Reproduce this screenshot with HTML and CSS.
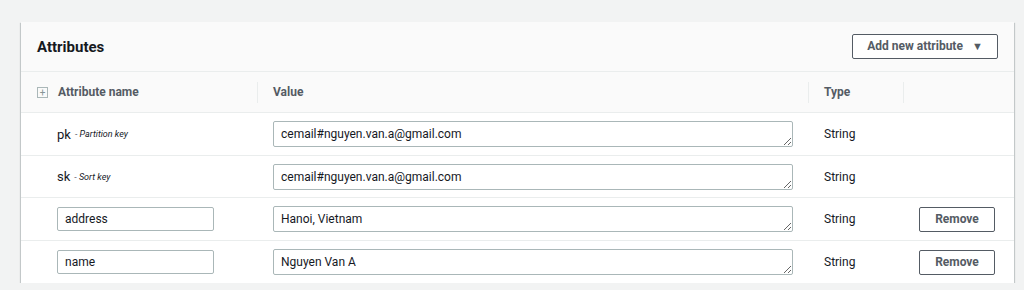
FILE: index.html
```html
<!DOCTYPE html>
<html lang="en">
<head>
<meta charset="UTF-8">
<title>Attributes</title>
<link rel="stylesheet" href="styles.css">
</head>
<body>
<div class="panel">
    <div class="panel-header">
        <h2>Attributes</h2>
        <button class="btn btn-dropdown">Add new attribute <span class="caret">&#9660;</span></button>
    </div>
    <div class="attr-table">
        <div class="row head">
            <div class="cell c-name"><span class="expand">+</span>Attribute name</div>
            <div class="cell c-value">Value</div>
            <div class="cell c-type">Type</div>
            <div class="cell c-action"></div>
        </div>
        <div class="row">
            <div class="cell c-name indent"><span class="key-name">pk</span> <span class="key">- Partition key</span></div>
            <div class="cell c-value"><textarea class="value-box" rows="1">cemail#nguyen.van.a@gmail.com</textarea></div>
            <div class="cell c-type">String</div>
            <div class="cell c-action"></div>
        </div>
        <div class="row">
            <div class="cell c-name indent"><span class="key-name">sk</span> <span class="key">- Sort key</span></div>
            <div class="cell c-value"><textarea class="value-box" rows="1">cemail#nguyen.van.a@gmail.com</textarea></div>
            <div class="cell c-type">String</div>
            <div class="cell c-action"></div>
        </div>
        <div class="row">
            <div class="cell c-name indent"><input class="name-box" type="text" value="address"></div>
            <div class="cell c-value"><textarea class="value-box" rows="1">Hanoi, Vietnam</textarea></div>
            <div class="cell c-type">String</div>
            <div class="cell c-action"><button class="btn btn-small">Remove</button></div>
        </div>
        <div class="row">
            <div class="cell c-name indent"><input class="name-box" type="text" value="name"></div>
            <div class="cell c-value"><textarea class="value-box" rows="1">Nguyen Van A</textarea></div>
            <div class="cell c-type">String</div>
            <div class="cell c-action"><button class="btn btn-small">Remove</button></div>
        </div>
    </div>
</div>
</body>
</html>
```

FILE: styles.css
```css
body {
    margin: 0;
    padding: 22px 10px 0 21px;
    background-color: #f2f3f3;
    font-family: Roboto, "Open Sans", sans-serif;
    font-size: 12px;
    color: #16191f;
}
.panel {
    width: 993px;
    background: #fff;
    box-shadow: 0 1px 1px 0 rgba(0, 28, 36, .3), 1px 1px 1px 0 rgba(0, 28, 36, .15), -1px 1px 1px 0 rgba(0, 28, 36, .15);
}
.panel-header {
    display: flex;
    align-items: center;
    justify-content: space-between;
    height: 50px;
    padding: 0 16px;
    background: #fafafa;
    border-bottom: 1px solid #eaeded;
    box-sizing: border-box;
}
h2 {
    margin: 0;
    font-size: 15px;
    font-weight: 700;
    color: #16191f;
}
.btn {
    font-family: Roboto, "Open Sans", sans-serif;
    font-weight: 700;
    color: #545b64;
    background: #fff;
    border: 1px solid #545b64;
    border-radius: 2px;
    cursor: pointer;
}
.btn-dropdown {
    width: 146px;
    height: 25px;
    font-size: 12px;
    margin-top: -1px;
}
.caret {
    font-size: 11px;
    margin-left: 6px;
}
.btn-small {
    width: 76px;
    height: 25px;
    font-size: 12px;
}
.row {
    display: flex;
    height: 43px;
    border-top: 1px solid #eaeded;
    box-sizing: border-box;
}
.row.head {
    height: 40px;
    border-top: none;
    background: #fafafa;
    font-weight: 700;
    color: #545b64;
}
.row:nth-child(3) {
    height: 42px;
}
.cell {
    display: flex;
    align-items: center;
    padding-left: 16px;
    box-sizing: border-box;
    position: relative;
}
.head .cell + .cell::before {
    content: "";
    position: absolute;
    left: 0;
    top: 10px;
    bottom: 9px;
    border-left: 1px solid #eaeded;
}
.c-name { width: 236px; }
.c-value { width: 551px; padding-right: 15px; }
.c-type { width: 95px; }
.c-action { flex: 1; }
.indent { padding-left: 36px; }
.expand {
    width: 9px;
    height: 9px;
    border: 1px solid #aab7b8;
    color: #879596;
    font-size: 10px;
    font-weight: 400;
    line-height: 9px;
    text-align: center;
    margin-right: 10px;
}
.key-name {
    font-size: 13px;
}
.key {
    font-size: 9px;
    font-style: italic;
    margin-left: 4px;
}
.value-box {
    width: 100%;
    height: 26px;
    padding: 4px 7px;
    box-sizing: border-box;
    border: 1px solid #aab7b8;
    border-radius: 2px;
    font-family: Roboto, "Open Sans", sans-serif;
    font-size: 12px;
    color: #16191f;
    line-height: 16px;
    overflow: hidden;
}
.name-box {
    width: 157px;
    height: 24px;
    padding: 0 7px;
    box-sizing: border-box;
    border: 1px solid #aab7b8;
    border-radius: 2px;
    font-family: Roboto, "Open Sans", sans-serif;
    font-size: 12px;
    color: #16191f;
}
```
